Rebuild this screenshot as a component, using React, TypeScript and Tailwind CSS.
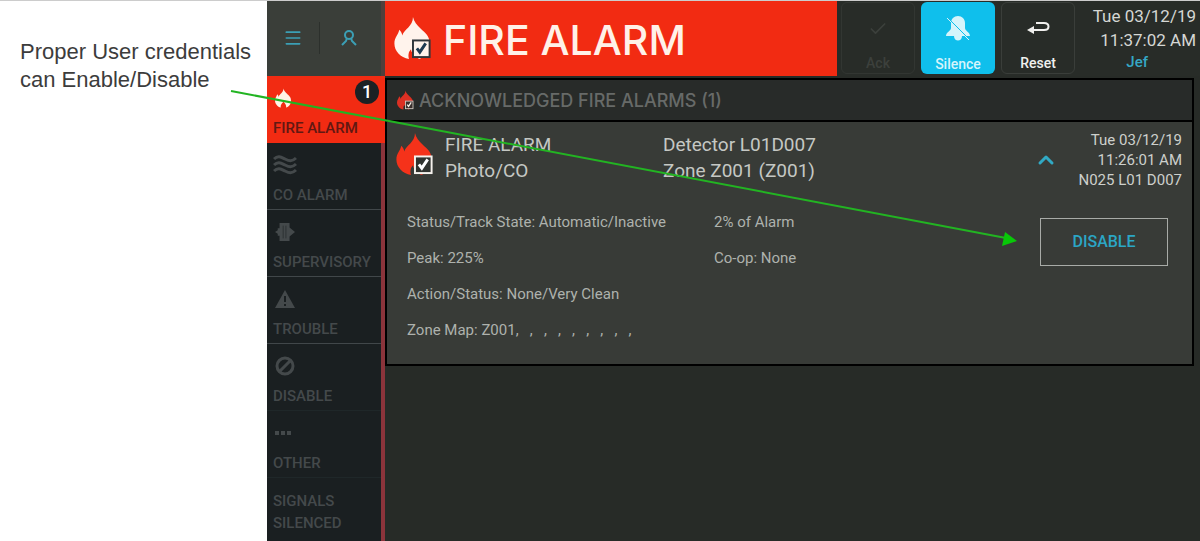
import type { ReactNode } from 'react'
import { Check, ChevronUp, Menu } from 'lucide-react'

interface Category {
  label: string
  icon?: ReactNode
  divider: string
}

interface FlameProps {
  className: string
  color: string
  boxFill?: string
  boxStroke?: string
  tick?: string
}

// Flame with an optional "acknowledged" tick box in its lower right corner
function Flame({ className, color, boxFill, boxStroke, tick }: FlameProps) {
  return (
    <svg viewBox="0 0 38 45" className={className} aria-hidden="true">
      {boxFill ? (
        <>
          <path
            fill={color}
            d="M20 1C21 6 24 9 28 13C32 17 37 20 37 28C37 37 32 42 26 44L24 41C21 40 18 37 18 34C15 37 15 41 16 44C7 42 1 36 1 28C1 22 5 19 6 14C8 16 9 18 9 20C11 13 20 11 20 1Z"
          />
          <rect x="20" y="25" width="17" height="17" fill={boxFill} stroke={boxStroke} strokeWidth="2" />
          <path d="M24 33L27 37L33 28" fill="none" stroke={tick} strokeWidth="3" />
        </>
      ) : (
        <path
          fill={color}
          d="M20 1C21 6 24 9 28 13C32 17 37 20 37 28C37 37 32 42 26 44C27 39 24 35 20 31C15 35 13 40 14 44C7 42 1 36 1 28C1 22 5 19 6 14C8 16 9 18 9 20C11 13 20 11 20 1Z"
        />
      )}
    </svg>
  )
}

const categories: Category[] = [
  {
    label: 'CO ALARM',
    divider: 'border-[#41474a]',
    icon: (
      <svg viewBox="0 0 24 20" className="h-5 w-6" fill="none" stroke="currentColor" strokeWidth="3">
        <path d="M1 4C5 0 8 2 12 4S19 7 23 3M1 10C5 6 8 8 12 10S19 13 23 9M1 16C5 12 8 14 12 16S19 19 23 15" />
      </svg>
    ),
  },
  {
    label: 'SUPERVISORY',
    divider: 'border-[#41474a]',
    icon: (
      <svg viewBox="0 0 24 22" className="h-5 w-6" fill="currentColor">
        <path d="M6 1H17V6L23 11L17 16V21H6V15H4V13L1 11L4 9V7H6Z" />
        <path d="M10 4V18M13 4V18" stroke="#1a1f21" strokeWidth="1" strokeOpacity="0.6" />
      </svg>
    ),
  },
  {
    label: 'TROUBLE',
    divider: 'border-[#41474a]',
    icon: (
      <svg viewBox="0 0 24 20" className="h-5 w-6" fill="currentColor">
        <path d="M12 1L22 19H2Z" />
        <path d="M12 7V13M12 15V17" stroke="#1a1f21" strokeWidth="2" />
      </svg>
    ),
  },
  {
    label: 'DISABLE',
    divider: 'border-[#1f2729]',
    icon: (
      <svg viewBox="0 0 24 20" className="h-5 w-6" fill="none" stroke="currentColor" strokeWidth="3">
        <circle cx="12" cy="10" r="8" />
        <path d="M7 15L17 5" />
      </svg>
    ),
  },
  {
    label: 'OTHER',
    divider: 'border-[#1f2729]',
    icon: (
      <svg viewBox="0 0 24 20" className="h-5 w-6" fill="currentColor">
        <path d="M2 8H6V12H2ZM8 8H12V12H8ZM14 8H18V12H14Z" />
      </svg>
    ),
  },
]

function Sidebar() {
  return (
    <aside className="flex w-[118px] shrink-0 flex-col bg-[#1a1f21]">
      <div className="flex h-[76px] items-center border-r-4 border-[#50403c] bg-[#3a3e39] pl-4 text-[#3b9fb5]">
        <button aria-label="Menu" className="flex w-9">
          <Menu className="h-5 w-5" />
        </button>
        <div className="h-8 w-px bg-[#2c302c]" />
        <button aria-label="User" className="flex flex-1 justify-center pr-1">
          <svg viewBox="0 0 18 18" className="h-[18px] w-[18px]" fill="none" stroke="currentColor" strokeWidth="2">
            <circle cx="9" cy="6" r="4" />
            <path d="M7 9L6 12L2 16M11 9L12 12L16 16" />
          </svg>
        </button>
      </div>

      <nav className="flex flex-1 flex-col text-[15px]">
        <button className="flex h-[67px] flex-col bg-[#f22b12] pl-1.5 text-left text-[#611812]">
          <span className="flex w-full items-start justify-between pr-1.5">
            <Flame className="mt-3 h-5 w-5" color="#fff3e6" />
            <span className="mt-1 flex h-6 w-6 items-center justify-center rounded-full bg-[#1c2124] text-lg font-medium text-white">
              1
            </span>
          </span>
          <span className="mt-2.5 leading-5 font-medium">FIRE ALARM</span>
        </button>

        <div className="flex flex-1 flex-col border-r-4 border-[#8b343b] text-[#44494b]">
          {categories.map((item) => (
            <button
              key={item.label}
              className={`flex h-[67px] flex-col border-b pt-3 pl-1.5 text-left font-medium ${item.divider}`}
            >
              {item.icon}
              <span className="mt-2.5 leading-5">{item.label}</span>
            </button>
          ))}
          <button className="flex flex-1 flex-col pt-3 pl-1.5 text-left leading-[22px] font-medium">
            <span>SIGNALS</span>
            <span>SILENCED</span>
          </button>
        </div>
      </nav>
    </aside>
  )
}

function Header() {
  return (
    <header className="flex h-[76px] bg-[#282c28]">
      <div className="flex flex-1 items-center gap-3 bg-[#f22b12] pl-2">
        <Flame className="h-11 w-[38px]" color="#fff3ec" boxFill="#fff3ec" boxStroke="#30363c" tick="#1d3a52" />
        <h1 className="pt-1 font-[Inter,sans-serif] text-[41px] leading-none font-medium text-[#fff1e8]">
          FIRE ALARM
        </h1>
      </div>

      <div className="flex gap-1.5 py-0.5 pl-1 text-sm font-medium">
        <button
          disabled
          className="flex w-[74px] flex-col items-center justify-between rounded-md border border-[#323632] pt-4 text-[#3c403c]"
        >
          <Check className="h-5 w-5" />
          <span>Ack</span>
        </button>
        <button className="flex w-[74px] flex-col items-center justify-between rounded-md bg-[#0fbfec] pt-3 text-[#d5f4fb]">
          <svg viewBox="0 0 26 28" className="h-7 w-[26px]" fill="currentColor">
            <path d="M13 2C17 2 20 5 20 9V14C20 17 25 18 25 22H1C1 18 6 17 6 14V9C6 5 9 2 13 2ZM9 22H17C17 28 9 28 9 22Z" />
            <path d="M3 4L25 26" stroke="#0fbfec" strokeWidth="1" />
            <path d="M2 4L24 26" stroke="currentColor" strokeWidth="1" />
          </svg>
          <span>Silence</span>
        </button>
        <button className="flex w-[74px] flex-col items-center justify-between rounded-md border border-[#3a3e3a] pt-4 text-[#f0f0ee]">
          <svg viewBox="0 0 24 16" className="h-4 w-6" fill="none" stroke="currentColor" strokeWidth="2">
            <path d="M7 11H18C24 11 24 4 18 4H10" />
            <path d="M1 11L8 7V15Z" fill="currentColor" stroke="none" />
          </svg>
          <span>Reset</span>
        </button>
      </div>

      <div className="flex w-[125px] flex-col items-end pt-1 pr-1 text-[17px] leading-6 text-[#d5d7d4]">
        <span>Tue 03/12/19</span>
        <span>11:37:02 AM</span>
        <span className="pr-12 text-[15px] leading-5 font-medium text-[#35a8c6]">Jef</span>
      </div>
    </header>
  )
}

function AlarmCard() {
  return (
    <section className="mt-0.5 mr-1.5 border-2 border-black bg-[#383b37]">
      <div className="flex h-[42px] items-center gap-1 border-b-2 border-black bg-[#282b29] pl-2">
        <Flame className="h-5 w-5" color="#dc3023" boxFill="#39302d" boxStroke="#cfc8c0" tick="#f4eee8" />
        <h2 className="pt-0.5 font-[Inter,sans-serif] text-lg font-medium text-[#676a68]">
          ACKNOWLEDGED FIRE ALARMS (1)
        </h2>
      </div>

      <div className="flex pt-2">
        <div className="flex-1">
          <div className="flex pt-0.5 pl-2 text-[19px] leading-[26px] text-[#c5c8c4]">
            <Flame className="h-11 w-[38px]" color="#f5321a" boxFill="#30332f" boxStroke="#f5f1ec" tick="#ffffff" />
            <div className="w-[230px] pl-3">
              <p>FIRE ALARM</p>
              <p>Photo/CO</p>
            </div>
            <div>
              <p>Detector L01D007</p>
              <p>Zone Z001 (Z001)</p>
            </div>
          </div>

          <div className="mt-5 flex pb-4 pl-5 text-[15px] leading-9 text-[#aeb2ad]">
            <div className="w-[307px]">
              <p>Status/Track State: Automatic/Inactive</p>
              <p>Peak: 225%</p>
              <p>Action/Status: None/Very Clean</p>
              <p className="whitespace-pre">Zone Map: Z001,   ,   ,   ,   ,   ,   ,   ,   ,</p>
            </div>
            <div>
              <p>2% of Alarm</p>
              <p>Co-op: None</p>
            </div>
          </div>
        </div>

        <div className="flex flex-col items-end pr-2.5">
          <div className="flex items-center gap-5 text-right text-[15px] leading-5 text-[#cdd0cc]">
            <button aria-label="Collapse" className="text-[#31a9c4]">
              <ChevronUp className="h-6 w-6" strokeWidth={3} />
            </button>
            <div>
              <p>Tue 03/12/19</p>
              <p>11:26:01 AM</p>
              <p>N025 L01 D007</p>
            </div>
          </div>
          <button className="mt-7 mr-3.5 h-12 w-32 border border-[#a8aba7] text-base font-medium text-[#2ba6c5]">
            DISABLE
          </button>
        </div>
      </div>
    </section>
  )
}

export default function App() {
  return (
    <div className="relative flex min-h-screen bg-white font-[Roboto,sans-serif]">
      <div className="w-[267px] shrink-0 pt-[38px] pl-5">
        <p className="font-['Liberation_Sans',Arial,sans-serif] text-[22px] leading-7 whitespace-nowrap text-[#3c3c3c]">
          Proper User credentials
          <br />
          can Enable/Disable
        </p>
      </div>

      <Sidebar />

      <main className="min-w-0 flex-1 bg-[#272b27]">
        <Header />
        <AlarmCard />
      </main>

      {/* callout arrow from the note to the DISABLE button */}
      <svg
        viewBox="0 0 1020 250"
        className="pointer-events-none absolute top-0 left-0 h-[250px] w-[1020px]"
        aria-hidden="true"
      >
        <path d="M231 91L1006 238" stroke="#22b422" strokeWidth="2" />
        <path d="M1017 241L1002 246L1005 232Z" fill="#08c808" />
      </svg>
      <div className="pointer-events-none absolute inset-x-0 top-0 h-px bg-[#cccccc]" />
    </div>
  )
}
